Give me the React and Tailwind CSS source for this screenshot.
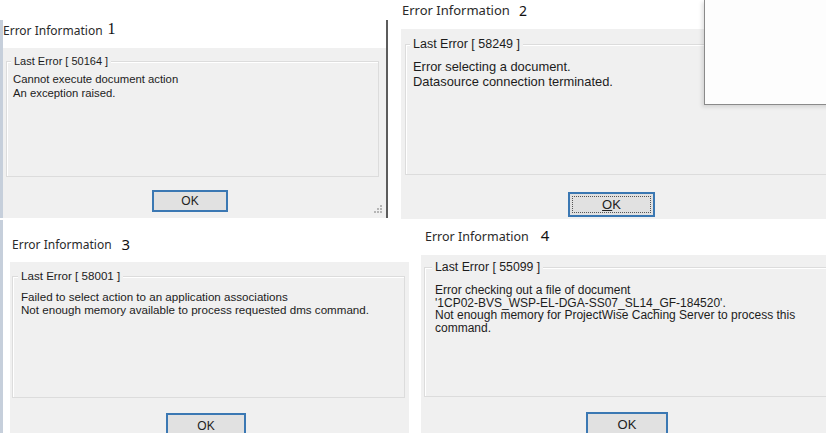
import React from "react";

const sans = "font-['Liberation_Sans',Arial,sans-serif]";
const ui = "font-['Noto_Sans','Open_Sans',sans-serif]";

function Grip() {
  return (
    <svg width="10" height="10" viewBox="0 0 10 10" className="mb-[-2px] mr-[3px]">
      <g fill="#b5b5b5">
        <rect x="7" y="1" width="2" height="2" />
        <rect x="4" y="4" width="2" height="2" />
        <rect x="7" y="4" width="2" height="2" />
        <rect x="1" y="7" width="2" height="2" />
        <rect x="4" y="7" width="2" height="2" />
        <rect x="7" y="7" width="2" height="2" />
      </g>
    </svg>
  );
}

export default function App() {
  return (
    <div className={`w-[826px] h-[433px] overflow-hidden bg-white flex flex-col text-[#1c1c1c] ${sans}`}>
      {/* Row 1 */}
      <div className="flex h-[220px] shrink-0">
        {/* Panel 1 */}
        <div className="w-[388px] shrink-0 pt-[20px] flex flex-col">
          <div className="h-[198px] border-l-[3px] border-l-[#c6cfdb] border-r-2 border-r-[#5c5c5c] flex flex-col">
            <div className="h-[28px] shrink-0 pt-[3px] flex items-start gap-[5px] leading-[16px]">
              <span className={`${ui} text-[12px] text-[#2a2a2a]`}>Error Information</span>
              <span className="font-['Liberation_Serif',serif] text-[16px] text-[#111] mt-[-2px]">1</span>
            </div>
            <div className="flex-1 bg-[#f0f0f0] flex flex-col">
              <fieldset className="mt-[6px] ml-[3px] w-[373px] h-[123px] border border-[#dcdcdc] shadow-[inset_1px_1px_0_#fff]">
                <legend className="ml-[4px] px-[3px] bg-[#f0f0f0] text-[11px] leading-[14px]">Last Error [ 50164 ]</legend>
                <div className="pt-[4px] pl-[6px] text-[11.3px] leading-[14px]">
                  <div>Cannot execute document action</div>
                  <div>An exception raised.</div>
                </div>
              </fieldset>
              <div className="mt-[13px] flex items-end">
                <button className="ml-[149px] w-[76px] h-[22px] bg-[#e1e1e1] border-2 border-[#3b78b3] text-[12px] text-[#222] flex items-center justify-center">OK</button>
                <div className="ml-auto">
                  <Grip />
                </div>
              </div>
            </div>
          </div>
        </div>

        {/* Panel 2 */}
        <div className="ml-[13px] flex-1 relative flex flex-col overflow-hidden">
          <div className="h-[29px] shrink-0 pt-[1px] pl-[1px] flex items-start gap-[9px] leading-[18px]">
            <span className={`${ui} text-[13px] text-[#2a2a2a]`}>Error Information</span>
            <span className={`${ui} text-[14px] text-[#111] mt-[1px]`}>2</span>
          </div>
          <div className="h-[190px] bg-[#f0f0f0] flex flex-col overflow-hidden">
            <fieldset className="mt-[8px] ml-[4px] w-[460px] h-[138px] shrink-0 border border-[#dcdcdc] shadow-[inset_1px_1px_0_#fff]">
              <legend className="ml-[4px] px-[3px] bg-[#f0f0f0] text-[12.5px] leading-[15px]">Last Error [ 58249 ]</legend>
              <div className="pt-[7px] pl-[7px] text-[12.9px] leading-[15px]">
                <div>Error selecting a document.</div>
                <div>Datasource connection terminated.</div>
              </div>
            </fieldset>
            <div className="mt-[17px] flex">
              <button className="ml-[167px] w-[87px] h-[25px] bg-[#e1e1e1] border-2 border-[#3b78b3] text-[13px] text-[#222] flex items-center justify-center p-[2px]">
                <span className="w-full h-full border border-dotted border-[#555] flex items-center justify-center">
                  <span><span className="underline">O</span>K</span>
                </span>
              </button>
            </div>
          </div>
          <div className="absolute left-[303px] top-0 w-[140px] h-[105px] bg-[#fdfdfd] border-l border-b border-[#8a8a8a] shadow-[-2px_2px_4px_rgba(0,0,0,0.12)]" />
        </div>
      </div>

      {/* Row 2 */}
      <div className="flex flex-1">
        {/* Panel 3 */}
        <div className="w-[410px] shrink-0 border-l-[3px] border-l-[#c6cfdb] flex flex-col">
          <div className="h-[42px] shrink-0 pt-[17px] pl-[9px] flex items-start gap-[10px] leading-[16px]">
            <span className={`${ui} text-[12px] text-[#2a2a2a]`}>Error Information</span>
            <span className={`${ui} text-[15px] text-[#111] mt-[-1px]`}>3</span>
          </div>
          <div className="ml-[7px] w-[399px] flex-1 bg-[#f0f0f0] flex flex-col overflow-hidden">
            <fieldset className="mt-[7px] ml-[2px] w-[393px] h-[129px] shrink-0 border border-[#dcdcdc] shadow-[inset_1px_1px_0_#fff]">
              <legend className="ml-[5px] px-[3px] bg-[#f0f0f0] text-[11.6px] leading-[14px]">Last Error [ 58001 ]</legend>
              <div className="pt-[8px] pl-[8px] text-[11.6px] leading-[12.5px]">
                <div>Failed to select action to an application associations</div>
                <div>Not enough memory available to process requested dms command.</div>
              </div>
            </fieldset>
            <div className="mt-[15px] flex">
              <button className="ml-[156px] w-[80px] h-[25px] shrink-0 bg-[#e1e1e1] border-2 border-[#3b78b3] text-[12px] text-[#222] flex items-center justify-center">OK</button>
            </div>
          </div>
        </div>

        {/* Panel 4 */}
        <div className="ml-[11px] flex-1 flex flex-col overflow-hidden">
          <div className="h-[35px] shrink-0 pt-[9px] pl-[4px] flex items-start gap-[12px] leading-[16px]">
            <span className={`${ui} text-[12.5px] text-[#2a2a2a]`}>Error Information</span>
            <span className={`${ui} text-[15px] text-[#111] mt-[-2px]`}>4</span>
          </div>
          <div className="flex-1 bg-[#f0f0f0] flex flex-col overflow-hidden">
            <fieldset className="mt-[5px] ml-[3px] w-[420px] h-[137px] shrink-0 border border-[#dcdcdc] shadow-[inset_1px_1px_0_#fff]">
              <legend className="ml-[7px] px-[3px] bg-[#f0f0f0] text-[12.3px] leading-[14px]">Last Error [ 55099 ]</legend>
              <div className="pt-[10px] pl-[10px] text-[12px] leading-[12.5px]">
                <div>Error checking out a file of document</div>
                <div>'1CP02-BVS_WSP-EL-DGA-SS07_SL14_GF-184520'.</div>
                <div>Not enough memory for ProjectWise Caching Server to process this</div>
                <div>command.</div>
              </div>
            </fieldset>
            <div className="mt-[15px] flex">
              <button className="ml-[165px] w-[82px] h-[25px] shrink-0 bg-[#e1e1e1] border-2 border-[#3b78b3] text-[13px] text-[#222] flex items-center justify-center">OK</button>
            </div>
          </div>
        </div>
      </div>
    </div>
  );
}
